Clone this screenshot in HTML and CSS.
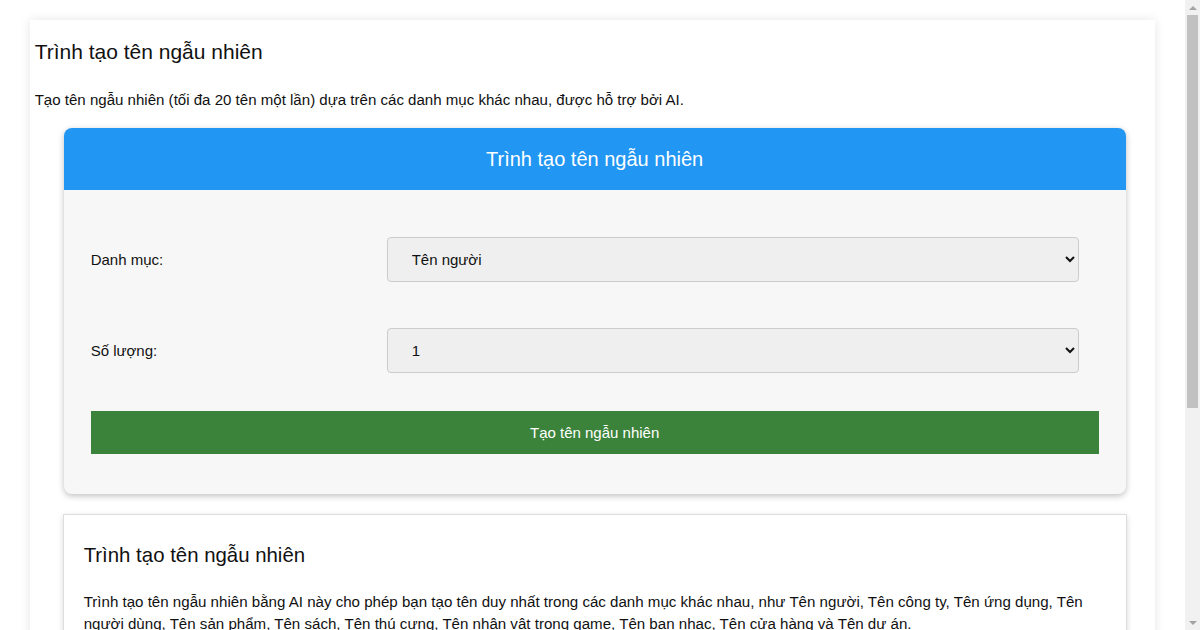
FILE: index.html
```html
<!DOCTYPE html>
<html lang="vi">
<head>
<meta charset="utf-8">
<title>Trình tạo tên ngẫu nhiên</title>
<link rel="stylesheet" href="styles.css">
</head>
<body>
<div class="viewport">
<div class="page">
  <h1 class="page-title">Trình tạo tên ngẫu nhiên</h1>
  <p class="page-desc">Tạo tên ngẫu nhiên (tối đa 20 tên một lần) dựa trên các danh mục khác nhau, được hỗ trợ bởi AI.</p>

  <div class="tool-card">
    <div class="tool-header">Trình tạo tên ngẫu nhiên</div>
    <div class="tool-body">
      <div class="form-row">
        <label class="form-label" for="cat">Danh mục:</label>
        <select class="form-select" id="cat">
          <option>Tên người</option>
          <option>Tên công ty</option>
          <option>Tên ứng dụng</option>
        </select>
      </div>
      <div class="form-row">
        <label class="form-label" for="qty">Số lượng:</label>
        <select class="form-select" id="qty">
          <option>1</option>
          <option>5</option>
          <option>10</option>
          <option>20</option>
        </select>
      </div>
      <button class="gen-btn" type="button">Tạo tên ngẫu nhiên</button>
    </div>
  </div>

  <div class="info-card">
    <h2 class="info-title">Trình tạo tên ngẫu nhiên</h2>
    <p class="info-text">Trình tạo tên ngẫu nhiên bằng AI này cho phép bạn tạo tên duy nhất trong các danh mục khác nhau, như Tên người, Tên công ty, Tên ứng dụng, Tên người dùng, Tên sản phẩm, Tên sách, Tên thú cưng, Tên nhân vật trong game, Tên ban nhạc, Tên cửa hàng và Tên dự án.</p>
    <p class="info-text">Chỉ cần chọn danh mục và số lượng tên bạn muốn, sau đó nhấn nút để nhận ngay danh sách tên ngẫu nhiên được tạo bởi AI.</p>
  </div>
</div>
</div>
<div class="scrollbar" aria-hidden="true">
  <div class="sb-arrow sb-up"></div>
  <div class="sb-track">
    <div class="sb-thumb"></div>
  </div>
  <div class="sb-arrow sb-down"></div>
</div>
</body>
</html>
```

FILE: styles.css
```css
html, body {
  margin: 0;
  padding: 0;
  height: 100%;
  overflow: hidden;
  background: #ffffff;
}

body {
  display: flex;
  font-family: "Liberation Sans", Arial, sans-serif;
  color: #111;
}

.viewport {
  flex: 1;
  min-width: 0;
  height: 100vh;
  overflow: hidden;
}

.page {
  width: 95%;
  margin: 20px auto 30px;
  padding: 0 5px 20px;
  box-sizing: border-box;
  background: #fff;
  box-shadow: 0 0 10px rgba(0, 0, 0, 0.1);
}

.page-title {
  font-size: 21px;
  font-weight: normal;
  line-height: 23px;
  margin: 0;
  padding-top: 20px;
  margin-bottom: 28px;
}

.page-desc {
  font-size: 15.07px;
  line-height: 17px;
  margin: 0 0 20px;
}

.tool-card {
  width: 1062px;
  margin-left: 29px;
  border-radius: 8px;
  background: #f7f7f7;
  box-shadow: 0 2px 6px rgba(0, 0, 0, 0.25);
  overflow: hidden;
}

.tool-header {
  background: #2196f3;
  color: #fff;
  font-size: 20px;
  line-height: 62px;
  height: 62px;
  text-align: center;
}

.tool-body {
  padding: 47px 27px 40px;
}

.form-row {
  display: grid;
  grid-template-columns: 296px 692px;
  align-items: center;
  margin-bottom: 46px;
}

.form-row + .form-row {
  margin-bottom: 38px;
}

.form-label {
  font-size: 15px;
}

.form-select {
  height: 45px;
  box-sizing: border-box;
  padding: 0 20px;
  font-family: "Liberation Sans", Arial, sans-serif;
  font-size: 15px;
  color: #111;
  background-color: #efefef;
  border: 1px solid #cccccc;
  border-radius: 4px;
}

.gen-btn {
  display: block;
  width: 100%;
  height: 43px;
  border: none;
  background: #3b833a;
  color: #fff;
  font-family: "Liberation Sans", Arial, sans-serif;
  font-size: 15px;
  cursor: pointer;
}

.info-card {
  width: 1064px;
  box-sizing: border-box;
  margin: 20px 0 0 28px;
  padding: 20px 20px 10px;
  background: #fff;
  border: 1px solid #dddddd;
  box-shadow: 0 2px 6px rgba(0, 0, 0, 0.15);
}

.info-title {
  font-size: 20.4px;
  font-weight: normal;
  line-height: 40px;
  margin: 0 0 16px;
}

.info-text {
  font-size: 15.1px;
  line-height: 22px;
  margin: 0 0 15px;
}

/* emulated page scrollbar */
.scrollbar {
  flex: 0 0 15px;
  width: 15px;
  height: 100vh;
  background: #f1f1f1;
  display: flex;
  flex-direction: column;
}

.sb-arrow {
  flex: 0 0 15px;
  display: flex;
  align-items: center;
  justify-content: center;
}

.sb-arrow::before {
  content: "";
  width: 0;
  height: 0;
  border-left: 4px solid transparent;
  border-right: 4px solid transparent;
}

.sb-up::before {
  border-bottom: 4px solid #a3a3a3;
}

.sb-down::before {
  border-top: 4px solid #a3a3a3;
}

.sb-track {
  flex: 1;
  padding: 0 2px;
}

.sb-thumb {
  height: 393px;
  background: #c1c1c1;
}
```
